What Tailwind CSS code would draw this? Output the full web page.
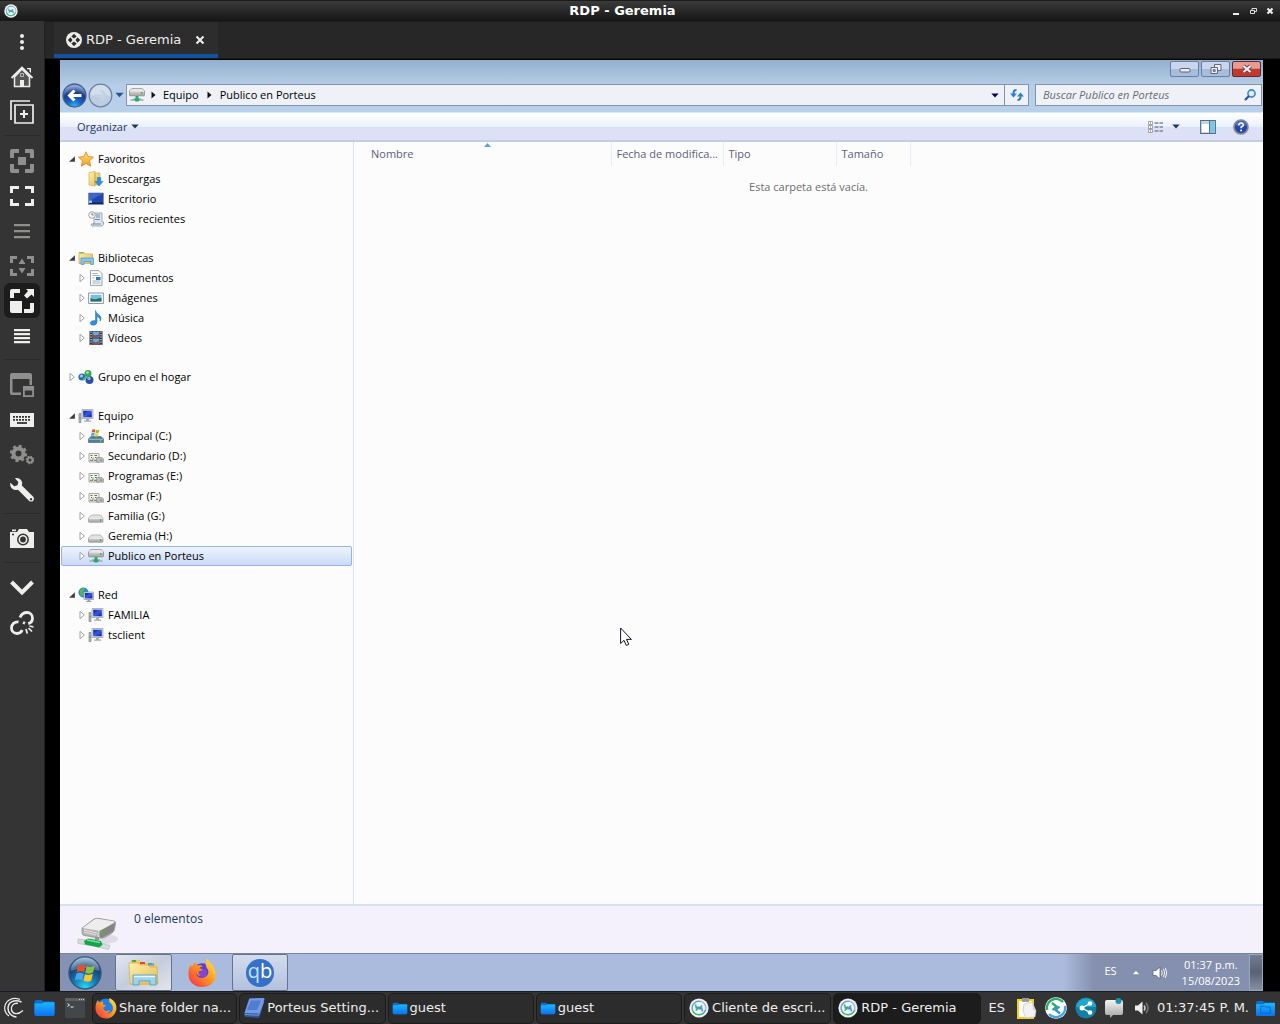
<!DOCTYPE html>
<html lang="es">
  <head>
    <meta charset="UTF-8" />
    <meta name="viewport" content="width=device-width, initial-scale=1" />
    <title>RDP - Geremia</title>
    <script src="https://cdn.jsdelivr.net/npm/@tailwindcss/browser@4"></script>
  </head>
  <body class="flex min-h-screen flex-col bg-[#2f2f2f] font-['DejaVu_Sans',sans-serif] text-[13px] text-[#eeeeec]">
    <!-- shared icons -->
    <svg class="absolute size-0" aria-hidden="true">
      <defs>
        <linearGradient id="gFolder" x1="0" y1="0" x2="0" y2="1"><stop offset="0" stop-color="#1cb5ff" /><stop offset="1" stop-color="#0a72f0" /></linearGradient>
        <linearGradient id="gYellow" x1="0" y1="0" x2="1" y2="1"><stop offset="0" stop-color="#fff2b0" /><stop offset="1" stop-color="#e3b94f" /></linearGradient>
        <linearGradient id="gStar" x1="0" y1="0" x2="0" y2="1"><stop offset="0" stop-color="#ffe680" /><stop offset="1" stop-color="#f59a1c" /></linearGradient>
        <linearGradient id="gScreen" x1="0" y1="0" x2="1" y2="1"><stop offset="0" stop-color="#0a1a9c" /><stop offset=".5" stop-color="#3a5ae0" /><stop offset="1" stop-color="#0c1f9a" /></linearGradient>
        <linearGradient id="gMetal" x1="0" y1="0" x2="0" y2="1"><stop offset="0" stop-color="#f4f4f4" /><stop offset="1" stop-color="#a2a2a2" /></linearGradient>
        <linearGradient id="gFire" x1="1" y1="0" x2="0" y2="1"><stop offset="0" stop-color="#fff04a" /><stop offset=".45" stop-color="#ff9a1f" /><stop offset="1" stop-color="#f5264f" /></linearGradient>
      </defs>
      <symbol id="remmina" viewBox="0 0 20 20">
        <circle cx="10" cy="10" r="9.6" fill="#f1f1ef" />
        <path d="M3.6 12.5A7 7 0 0 1 12.5 3.5" fill="none" stroke="#5b9be0" stroke-width="1.3" />
        <path d="M12.5 3.5A7 7 0 0 1 16.6 12" fill="none" stroke="#7db2ec" stroke-width="1.3" />
        <path d="M3.6 12.5A7 7 0 0 0 16.6 12" fill="none" stroke="#36b583" stroke-width="1.5" />
        <path d="M6.500 6.500l.8 3.300 3.200-.8M6.800 12.500l3.500-3.500" fill="none" stroke="#2fb37c" stroke-width="1.500" />
        <path d="M13.500 13.500l-.8-3.300-3.200.8M13.200 7.500L9.700 11" fill="none" stroke="#4a8fe0" stroke-width="1.500" />
      </symbol>
      <symbol id="folder" viewBox="0 0 22 18">
        <path d="M1 3a2 2 0 0 1 2-2h5l2 1.600h9a2 2 0 0 1 2 2V15a2 2 0 0 1-2 2H3a2 2 0 0 1-2-2z" fill="#0a6fd0" />
        <path d="M1 4.500h7.500l2-1.200H21V15a2 2 0 0 1-2 2H3a2 2 0 0 1-2-2z" fill="url(#gFolder)" />
      </symbol>
      <symbol id="firefox" viewBox="0 0 28 28">
        <circle cx="14" cy="15.500" r="10.500" fill="#5b3fd6" />
        <path d="M18.500.5c1 2.500 4 4.500 6.200 8.200C28.500 15.500 27 23 20.500 26.500 13 30 4 27.500 1.200 20-.3 15 .5 9.500 3 6c0 1 .2 2 .8 2.700C4.500 6.500 6 4.700 7.500 3.500c.2 1.700.7 3 2 3.700 1.600-.6 3.500-.3 4.800 1-2 .2-3.300 1.200-3.800 2.300-1.500.6-3 1.800-2.800 4C8.300 18.500 12 20 15.500 18.800c3.500-1.300 5-4.300 3.800-7.300-.7-1.700-2-2.500-2.300-5.500C16.900 4 17.500 2 18.500.5z" fill="url(#gFire)" />
        <circle cx="14.500" cy="14.500" r="3.800" fill="#8443dd" />
        <path d="M7.700 11c2-1.500 4.300-1.300 6.300 0-1 1-2 1.700-3.700 1.800-.5 2 .4 3.700 2 4.300-3 .4-5-2.300-4.600-6.100z" fill="#ff8a16" />
      </symbol>
      <symbol id="firefox-blue" viewBox="0 0 24 24">
        <circle cx="12" cy="12" r="10.500" fill="#1f7fe6" />
        <path d="M15.500 1C21 3 24 8 23.300 13.500 22 20 17.500 23.500 12 23.500 5 23.500.5 18 .5 12 .5 8 1.500 5 3.500 3c0 1.600.5 2.600 1.300 3.300C6.500 5 8 4.800 9.300 5.300 8.500 6.500 8.600 7.800 9.500 8.800h2.300c0 1.500-2.500 2.200-2.800 3.200 0 2.400 2 3.500 4 3.200 1.500-.3 2.200-.6 3.200-.2-.8 1.800-2.700 2.800-4.700 2.800 3.800 1.200 7.800-1 8-5.300.2-4-2.500-5.500-4-7.500z" fill="url(#gFire)" />
      </symbol>
      <symbol id="computer" viewBox="0 0 16 16">
        <path d="M1 5.500h2v9H1z" fill="#b9bcc0" stroke="#70757c" stroke-width=".6" /><path d="M1.500 9h1v2h-1z" fill="#4cae3c" />
        <path d="M4 1.500h11v9H4z" fill="#dfe3ea" stroke="#949ba8" stroke-width=".7" />
        <path d="M5.200 2.700h8.600v6.600H5.200z" fill="url(#gScreen)" /><path d="M8 10.800h3v1.700h2.200v1.300H6v-1.300h2z" fill="#a5abb5" />
      </symbol>
      <symbol id="drive" viewBox="0 0 16 16">
        <path d="M3.500 7h9L15 10v3.500q0 .8-.8.8H1.300q-.8 0-.8-.8V10z" fill="url(#gMetal)" stroke="#8b8b8b" stroke-width=".6" />
        <path d="M.8 10.200h14" stroke="#fff" stroke-width=".8" /><path d="M12 11h1.200v2H12z" fill="#4ba83a" />
      </symbol>
      <symbol id="shared-drive" viewBox="0 0 16 16">
        <path d="M1 5.500h10V14H1z" fill="#f4f4ea" stroke="#85877f" stroke-width=".7" />
        <path d="M2.500 7.500h2M6.500 7.500h2.500M3 9.500h1M7 9.500h1.500M2 12.300h3M6 12.300h3" stroke="#65645b" stroke-width="1.100" /><path d="M5 9.500v3" stroke="#4ca45c" />
        <path d="M8.500 9.500H14l1.500 1.700v3h-7z" fill="#b9bab7" stroke="#7b7d78" stroke-width=".5" /><path d="M12.500 11.600h1.200v1.500h-1.200z" fill="#3ea341" />
      </symbol>
      <symbol id="net-drive" viewBox="0 0 16 16">
        <path d="M3 1.500h10l2.500 2.300V8q0 .8-.8.8H1.300Q.5 8.800.5 8V3.800z" fill="url(#gMetal)" stroke="#85858a" stroke-width=".7" />
        <path d="M1 4h14" stroke="#fff" stroke-width=".6" /><path d="M12.200 5h1.200v2h-1.200z" fill="#43a738" />
        <path d="M6.500 9h3v2.500H12L9.500 14.500h-3L4 11.500h2.500z" fill="#27a768" /><path d="M1.500 13h4M10.500 13h4" stroke="#9ca5a5" stroke-width="1.700" />
      </symbol>
      <symbol id="win-flag" viewBox="0 0 20 20">
        <path d="M3.500 3.500Q6.500 1.500 10 3.300L8.800 9Q5.500 7.300 2.300 9z" fill="#e8502a" />
        <path d="M11 3.700Q14 5.200 18 3.200L16.600 9Q13 11 9.800 9.400z" fill="#8bc53f" />
        <path d="M2 10.200Q5 8.600 8.500 10.200L7.200 16Q4 14.400.8 16z" fill="#46a8e8" />
        <path d="M9.500 10.600Q13 12 16.400 10.200L15 16Q12 18 8.300 16.400z" fill="#fdc72d" />
      </symbol>
      <symbol id="open" viewBox="0 0 8 8"><path d="M7.800.200v7.600H.2z" fill="#3c3c3c" /></symbol>
      <symbol id="closed" viewBox="0 0 8 10"><path d="M2 1.300v7.400L6.300 5z" fill="#fff" stroke="#a3a3a3" /></symbol>
      <symbol id="caret" viewBox="0 0 8 5"><path d="M.3.5h7.400L4 4.600z" fill="currentColor" /></symbol>
      <symbol id="right" viewBox="0 0 5 8"><path d="M.5.5v7L4.500 4z" fill="#111" /></symbol>
    </svg>

    <!-- window title -->
    <header class="flex h-[21px] shrink-0 items-center border-t border-[#1b1b1b] bg-linear-to-b from-[#3b3b3b] to-[#161616] px-1">
      <svg class="size-[14px]"><use href="#remmina" /></svg>
      <h1 class="flex-1 pr-1 text-center text-[13px] font-bold text-white">RDP - Geremia</h1>
      <div class="flex gap-[7px] pr-px">
        <button aria-label="Minimizar"><svg class="size-[10px]" viewBox="0 0 10 10"><path d="M2 7h6v2H2z" fill="#eee" /></svg></button>
        <button aria-label="Restaurar"><svg class="size-[10px]" viewBox="0 0 10 10" fill="none" stroke="#ddd"><path d="M4 4V2.500h4.500v3H7M2.500 4.500h4v3h-4z" /></svg></button>
        <button aria-label="Cerrar"><svg class="size-[10px]" viewBox="0 0 10 10"><path d="M2.500 2.500l5 5M7.500 2.500l-5 5" stroke="#eee" stroke-width="2.200" /></svg></button>
      </div>
    </header>

    <div class="flex flex-1">
      <!-- Remmina toolbar -->
      <nav class="flex w-[45px] shrink-0 flex-col border-r border-[#222] bg-[#343434] px-1 pt-[3px]" aria-label="Herramientas">
        <button class="flex h-[35px] items-center justify-center" aria-label="Menú"><svg class="size-6" viewBox="0 0 24 24" fill="#eeeeec"><circle cx="12" cy="6" r="2" /><circle cx="12" cy="12" r="2" /><circle cx="12" cy="18" r="2" /></svg></button>
        <button class="flex h-[35px] items-center justify-center" aria-label="Inicio"><svg class="size-6" viewBox="0 0 24 24"><path d="M4.500 12v9.500h15V12L12 4z" fill="#555" stroke="#eeeeec" stroke-width="1.500" /><path d="M1.500 13L12 2.500 22.500 13" fill="none" stroke="#eeeeec" stroke-width="1.800" /><path d="M17 3h4v5l-1.500-1.500V4.300H17zM10 15h4v7h-4z" fill="#eeeeec" /><path d="M10.500 8.500h3v3h-3z" fill="none" stroke="#bbb" /></svg></button>
        <button class="flex h-[35px] items-center justify-center" aria-label="Duplicar conexión"><svg class="size-6" viewBox="0 0 24 24" fill="none" stroke="#eeeeec" stroke-width="1.700"><path d="M1 20V1h19M5 5h18v18H5z" /><path d="M14 10v8M10 14h8" stroke-width="2" /></svg></button>
        <hr class="my-1.5 h-[2px] border-0 border-t border-[#2b2b2b]" />
        <button class="flex h-[35px] items-center justify-center" aria-label="Ajustar ventana"><svg class="size-6" viewBox="0 0 24 24" fill="#8f8f8d"><path d="M0 9V2q0-2 2-2h7v4H4v5zM15 0h7q2 0 2 2v7h-4V4h-5zM24 15v7q0 2-2 2h-7v-4h5v-5zM9 24H2q-2 0-2-2v-7h4v5h5zM8 8h8v8H8z" /></svg></button>
        <button class="flex h-[35px] items-center justify-center" aria-label="Pantalla completa"><svg class="size-6" viewBox="0 0 24 24" fill="none" stroke="#eeeeec" stroke-width="3"><path d="M1.500 9V3.500H9M15 3.500h7.500V9M22.500 15v5.500H15M9 20.500H1.500V15" /></svg></button>
        <button class="flex h-[35px] items-center justify-center" aria-label="Opciones de pantalla"><svg class="size-6" viewBox="0 0 24 24" fill="#8f8f8d"><path d="M4 5h16v2.200H4zM4 11h16v2.200H4zM4 17h16v2.200H4z" /></svg></button>
        <button class="flex h-[35px] items-center justify-center" aria-label="Resolución dinámica"><svg class="size-6" viewBox="0 0 24 24"><path d="M1.500 9V3.500H7M17 3.500h5.500V9M22.500 15v5.500H17M7 20.500H1.500V15" fill="none" stroke="#8f8f8d" stroke-width="3" /><path d="M12 4.500l3.500 5.500h-7zM12 19.500l3.500-5.500h-7z" fill="#8f8f8d" /></svg></button>
        <button class="flex h-[35px] items-center justify-center rounded-md bg-[#1c1c1c]" aria-label="Modo escalado" aria-pressed="true"><svg class="size-6" viewBox="0 0 24 24" fill="#eeeeec"><path d="M0 9V2q0-2 2-2h8v4H4v5zM24 14v8q0 2-2 2h-8v-4h6v-6zM0 12h12v12H2q-2 0-2-2zM16 0h8v8l-2.500-2.500-4.500 4-3-3 4-4.500z" /></svg></button>
        <button class="flex h-[35px] items-center justify-center" aria-label="Calidad"><svg class="size-6" viewBox="0 0 24 24" fill="#eeeeec"><path d="M4 5h16v2.200H4zM4 9h16v2.200H4zM4 13h16v2.200H4zM4 17h16v2.200H4z" /></svg></button>
        <hr class="my-1.5 h-[2px] border-0 border-t border-[#2b2b2b]" />
        <button class="flex h-[35px] items-center justify-center" aria-label="Multimonitor"><svg class="size-6" viewBox="0 0 24 24" fill="#8f8f8d"><path d="M2 0h18q2 0 2 2v10h-2.500V6h-17v13.500H11V22H2q-2 0-2-2V2q0-2 2-2z" /><path d="M13 13h11v11H13zm1.800 4.500v4.700h7.400v-4.700z" fill-rule="evenodd" /></svg></button>
        <button class="flex h-[35px] items-center justify-center" aria-label="Teclado"><svg class="size-6" viewBox="0 0 24 24"><path d="M0 5h24v14H0z" fill="#eeeeec" /><path d="M3 8.800h18M3 11.800h18" stroke="#343434" stroke-width="1.800" stroke-dasharray="2 1" /><path d="M7 15h10" stroke="#343434" stroke-width="1.800" /></svg></button>
        <button class="flex h-[35px] items-center justify-center" aria-label="Preferencias"><svg class="size-6" viewBox="0 0 24 24" fill="none" stroke="#8f8f8d"><circle cx="8.500" cy="10.500" r="5" stroke-width="4" /><circle cx="8.500" cy="10.500" r="7.600" stroke-width="2.200" stroke-dasharray="3 2.970" /><circle cx="20" cy="17" r="2.500" stroke-width="2" /><circle cx="20" cy="17" r="3.700" stroke-width="1.200" stroke-dasharray="1.500 1.400" /></svg></button>
        <button class="flex h-[35px] items-center justify-center" aria-label="Herramientas"><svg class="size-6" viewBox="0 0 24 24" fill="#eeeeec"><path fill-rule="evenodd" d="M5 .3C8-.5 11 1 12 4c.3 1.300.2 2.500-.2 3.500L23 18.500c1.300 1.300 1.300 3 .2 4.200-1.200 1.200-3 1.200-4.200 0L8 11.800C4.500 13 .8 10.700.3 7.200.1 6.300.1 5.500.3 4.700l4 3.600 3.200-1 .8-3.200zM21 20a1.200 1.200 0 1 0 .1 0z" /></svg></button>
        <hr class="my-1.5 h-[2px] border-0 border-t border-[#2b2b2b]" />
        <button class="flex h-[35px] items-center justify-center" aria-label="Captura de pantalla"><svg class="size-6" viewBox="0 0 24 24"><path d="M0 5h7l2-3h8l2 3h5v16H0z" fill="#eeeeec" /><path d="M2 2.500h4v1.700H2z" fill="#eeeeec" /><circle cx="13" cy="12.500" r="5.200" fill="none" stroke="#343434" stroke-width="1.500" /><circle cx="13" cy="12.500" r="2.900" fill="#343434" /><path d="M2 7.500h2" stroke="#343434" stroke-width="1.500" /></svg></button>
        <hr class="my-1.5 h-[2px] border-0 border-t border-[#2b2b2b]" />
        <button class="flex h-[35px] items-center justify-center" aria-label="Minimizar ventana"><svg class="size-6" viewBox="0 0 24 24" fill="none" stroke="#eeeeec" stroke-width="4"><path d="M1.500 6L12 16.500 22.500 6" /></svg></button>
        <button class="flex h-[35px] items-center justify-center" aria-label="Desconectar"><svg class="size-6" viewBox="0 0 24 24" fill="none" stroke="#eeeeec" stroke-width="2.800"><path d="M10 6.500C11.500 3 14 1.500 17 1.500c3.200 0 5.500 2.500 5.500 5.500 0 2.800-1.800 5-4.300 5.700M8.500 10.800C4.500 10.500 1.500 13.300 1.500 17c0 3 2.300 5.500 5.500 5.500 2.500 0 4.300-1.300 5.200-3.500M15 12.300l-2-.8" /><path d="M16 18l1.300 4.500M18.500 17l3.500 3.500M19.500 15l4 1" stroke-width="1.700" /></svg></button>
      </nav>

      <div class="flex flex-1 flex-col">
        <!-- connection tabs -->
        <div class="flex h-[38px] shrink-0 border-t border-b border-[#1b1b1b] bg-[#272727] pl-[9px]" role="tablist">
          <div class="flex w-[164px] items-center border-b-4 border-[#1551a3] bg-[#2d2d2d] pt-[3px] pl-3" role="tab" aria-selected="true">
            <svg class="mr-1 size-4" viewBox="0 0 16 16"><circle cx="8" cy="8" r="8" fill="#eeeeec" /><g fill="#2d2d2d"><path d="M8 1.800l2.700 2.700L8 6.500 5.300 4.500zM8 14.200l2.700-2.700L8 9.500l-2.700 2zM1.800 8l2.700-2.700L6.500 8l-2 2.700zM14.200 8l-2.700-2.700L9.500 8l2 2.700z" /></g></svg>
            <span>RDP - Geremia</span>
            <button class="ml-[14px]" aria-label="Cerrar pestaña"><svg class="size-[10px]" viewBox="0 0 10 10"><path d="M1.500 1.500l7 7M8.500 1.500l-7 7" stroke="#eee" stroke-width="2.100" /></svg></button>
          </div>
        </div>

        <div class="flex flex-1 bg-black pt-px pr-[17px] pl-[15px]">
          <!-- remote desktop -->
          <div class="flex flex-1 flex-col bg-[#fcfcfc] font-['Open_Sans','Noto_Sans',sans-serif] text-[11px] leading-5 text-black">
            <!-- explorer frame -->
            <div class="flex h-[52px] shrink-0 flex-col bg-linear-to-b from-[#94b0cf] via-[#b7cee8] to-[#b8d0e9]">
              <div class="flex h-[24px] items-start justify-end gap-[2px] pt-px pr-[2px]">
                <button class="flex h-4 w-[29px] items-center justify-center rounded-[2px] border border-[#6c7da6] bg-linear-to-b from-[#c8d7eb] from-50% to-[#a6bddb] to-50%" aria-label="Minimizar"><svg class="h-2 w-3" viewBox="0 0 12 8"><rect x="1" y="3.500" width="10" height="3.500" rx="1" fill="#eee" stroke="#5c6070" /></svg></button>
                <button class="flex h-4 w-[29px] items-center justify-center rounded-[2px] border border-[#6c7da6] bg-linear-to-b from-[#c8d7eb] from-50% to-[#a6bddb] to-50%" aria-label="Restaurar"><svg class="size-3" viewBox="0 0 12 12"><path d="M4.500 1.500h6.500v6H4.500z" fill="#eee" stroke="#555b70" stroke-width=".9" /><path d="M1 4.500h6.500v6H1z" fill="#eee" stroke="#555b70" stroke-width=".9" /><path d="M3.200 6.700h2v1.700h-2z" fill="#b4c6df" stroke="#555b70" stroke-width=".9" /></svg></button>
                <button class="flex h-4 w-[29px] items-center justify-center rounded-[2px] border border-[#5c2940] bg-linear-to-b from-[#e89c90] from-45% to-[#c43a28] to-50%" aria-label="Cerrar"><svg class="h-[10px] w-3" viewBox="0 0 12 10"><path d="M2.500 2l7 6M9.500 2l-7 6" stroke="#63405a" stroke-width="4" /><path d="M2.500 2l7 6M9.500 2l-7 6" stroke="#f4eef0" stroke-width="2.200" /></svg></button>
              </div>
              <div class="flex h-[22px] items-center">
                <div class="flex w-[66px] shrink-0 items-center gap-px pl-[2px]">
                  <button aria-label="Atrás"><svg class="size-[25px]" viewBox="0 0 25 25"><defs><radialGradient id="gBack" cx=".5" cy="1" r=".9"><stop offset="0" stop-color="#37bdf5" /><stop offset=".4" stop-color="#165bc0" /><stop offset=".7" stop-color="#1a3b92" /><stop offset="1" stop-color="#8ba5d8" /></radialGradient></defs><circle cx="12.500" cy="12.500" r="11.500" fill="url(#gBack)" stroke="#4b608b" stroke-width="1.300" /><path d="M19.500 12.500H8M12.500 7.500l-5 5 5 5" fill="none" stroke="#fff" stroke-width="3" /></svg></button>
                  <button aria-label="Adelante"><svg class="size-[25px]" viewBox="0 0 25 25"><circle cx="12.500" cy="12.500" r="11.300" fill="#bccde2" stroke="#6d7f9a" stroke-width="1.200" /><path d="M2.500 12a10 10 0 0 1 20 0q-10 3-20 0z" fill="#d2deec" /><path d="M6 12.500h11M13 7.500l5 5-5 5" fill="none" stroke="#c5d2e4" stroke-width="2.500" /></svg></button>
                  <button class="ml-px text-[#28558f]" aria-label="Páginas recientes"><svg class="h-[6px] w-[9px]"><use href="#caret" width="9" height="6" /></svg></button>
                </div>
                <div class="flex h-[22px] flex-1 items-center border border-[#8393a8] bg-[#eef2f8]">
                  <svg class="mx-[2px] size-4 shrink-0"><use href="#net-drive" /></svg>
                  <svg class="mr-[7px] ml-1 h-2 w-[5px]"><use href="#right" /></svg>
                  <a href="#equipo">Equipo</a>
                  <svg class="mx-2 h-2 w-[5px]"><use href="#right" /></svg>
                  <a href="#publico">Publico en Porteus</a>
                  <button class="mr-[5px] ml-auto text-[#06064f]" aria-label="Ubicaciones anteriores"><svg class="h-[5px] w-2"><use href="#caret" /></svg></button>
                  <button class="flex h-full w-[24px] items-center justify-center border-l border-[#8393a8]" aria-label="Actualizar"><svg class="size-[14px]" viewBox="0 0 14 14"><path d="M6.500 2Q3.500 2 3.500 5v1M7.500 12q3 0 3-3V8" fill="none" stroke="#2d7cc8" stroke-width="2" /><path d="M0 5.500h7L3.500 9.500zM7 8.500h7L10.500 4.500z" fill="#2f7fcb" /></svg></button>
                </div>
                <label class="mr-px ml-[6px] flex h-[22px] w-[227px] items-center border border-[#8393a8] bg-[#eef2f8]">
                  <input class="w-full min-w-0 flex-1 bg-transparent pl-[7px] italic outline-none placeholder:text-[#6a6a6a]" type="text" aria-label="Buscar" placeholder="Buscar Publico en Porteus" />
                  <svg class="mr-[5px] size-3 shrink-0" viewBox="0 0 12 12" fill="none"><circle cx="7.500" cy="4.500" r="3.600" fill="#d9eefb" stroke="#3c86c8" stroke-width="1.600" /><path d="M5 7L1 11" stroke="#24509c" stroke-width="2.200" /></svg>
                </label>
              </div>
            </div>

            <!-- command bar -->
            <div class="flex h-[30px] shrink-0 items-center border-t border-b-2 border-t-[#dbe7f5] border-b-[#c3cfdf] bg-linear-to-b from-[#fbfdff] from-10% via-[#eaf0fa] via-50% to-[#dce1f5] to-50% pr-[14px] pl-[17px] text-[#1e395b]">
              <button class="flex items-center gap-1">Organizar <svg class="h-[5px] w-2"><use href="#caret" /></svg></button>
              <button class="ml-auto flex items-center gap-2" aria-label="Cambiar la vista">
                <svg class="h-3 w-4" viewBox="0 0 16 12"><path d="M.5.5h4v3h-4zM.5 4.500h4v3h-4zM.5 8.500h4v3h-4z" fill="#fff" stroke="#8790a0" stroke-width=".8" /><path d="M2 2h1M2 10h1" stroke="#c33" /><path d="M2 6h1" stroke="#3a3" /><path d="M6.500 2h4M11.500 2H15M6.500 6h4M11.500 6H15M6.500 10h4M11.500 10H15" stroke="#7d879c" stroke-width="1.300" /></svg>
                <svg class="h-[5px] w-2"><use href="#caret" /></svg>
              </button>
              <button class="ml-5" aria-label="Mostrar el panel de vista previa"><svg class="h-[14px] w-4" viewBox="0 0 16 14"><path d="M.7.700h14.600v12.600H.700z" fill="#fff" stroke="#4d6a91" stroke-width="1.200" /><path d="M1.300 3h8" stroke="#8aa5c6" /><path d="M10 1.200h4.800v11.600H10z" fill="#7fc4e4" /><path d="M9.500 1v12" stroke="#4d7498" /></svg></button>
              <button class="ml-[17px]" aria-label="Ayuda"><svg class="size-4" viewBox="0 0 16 16"><circle cx="8" cy="8" r="7" fill="#2345a8" stroke="#7f8a9b" stroke-width="1.700" /><path d="M2.500 6.500a5.600 5.600 0 0 1 11 0q-5.500 2-11 0z" fill="#4c6cc4" /><path d="M5.700 6.200q.2-2.200 2.400-2.200t2.200 2c0 1.200-1.200 1.300-2.100 2.100v1.100" fill="none" stroke="#fff" stroke-width="1.500" /><circle cx="8.100" cy="11.600" r="1" fill="#fff" /></svg></button>
            </div>

            <div class="flex flex-1">
              <!-- navigation pane -->
              <nav class="w-[294px] shrink-0 border-r border-[#d9e2ee] px-px pt-[7px]" aria-label="Panel de navegación">
                <ul class="mb-[19px]">
                  <li><a href="#" class="flex h-5 items-center pl-2"><svg class="mr-[3px] size-[6px]"><use href="#open" /></svg><svg class="mr-1 size-4" viewBox="0 0 16 16"><path d="M8 .8l2.200 4.800 5.300.6-4 3.500 1.200 5.500L8 12.500l-4.700 2.700 1.200-5.500-4-3.500 5.300-.6z" fill="url(#gStar)" stroke="#dd8a2d" stroke-width=".9" /></svg>Favoritos</a></li>
                  <li><a href="#" class="flex h-5 items-center pl-[27px]"><svg class="mr-1 size-4" viewBox="0 0 16 16"><path d="M1 1.500l6-1V15l-6-1zM7 2h5v12H7z" fill="url(#gYellow)" stroke="#c9a347" stroke-width=".6" /><path d="M9.300 6.500h3.400v4H15L11 15l-4-4.500h2.300z" fill="#2c91e5" stroke="#1b6bbd" stroke-width=".5" /></svg>Descargas</a></li>
                  <li><a href="#" class="flex h-5 items-center pl-[27px]"><svg class="mr-1 size-4" viewBox="0 0 16 16"><path d="M.5 2h15v11.500H.5z" fill="#2346ab" stroke="#7b8cb0" stroke-width=".8" /><path d="M1 2.500h14L1 10z" fill="#3f67c9" /><path d="M1 11.500h14V13H1z" fill="#122556" /><path d="M1 9.500h3V12H1z" fill="#8acdf0" /></svg>Escritorio</a></li>
                  <li><a href="#" class="flex h-5 items-center pl-[27px]"><svg class="mr-1 size-4" viewBox="0 0 16 16"><path d="M6 2h8v9h1.500v2.500L14 15H4l-1-2h3z" fill="#e2e8ef" stroke="#8a94a2" stroke-width=".8" /><path d="M8 4h4M8 6h4M7 8.500h5M5 13h8" stroke="#71859e" /><circle cx="4" cy="4" r="3.300" fill="#f6f6f6" stroke="#9b9b9b" stroke-width=".9" /><path d="M4 2v2h1.600" fill="none" stroke="#666" stroke-width=".8" /></svg>Sitios recientes</a></li>
                </ul>
                <ul class="mb-[19px]">
                  <li><a href="#" class="flex h-5 items-center pl-2"><svg class="mr-[3px] size-[6px]"><use href="#open" /></svg><svg class="mr-1 size-4" viewBox="0 0 16 16"><path d="M1 2.500h5l1 1.500h7.500v9.500H1z" fill="url(#gYellow)" stroke="#caa54c" stroke-width=".7" /><path d="M1.500 3h4" stroke="#52a754" /><path d="M3 8h12.500v6.500h-3v-3H6v3H3z" fill="#82c7ec" stroke="#4c94c3" stroke-width=".7" /></svg>Bibliotecas</a></li>
                  <li><a href="#" class="flex h-5 items-center pl-[17px]"><svg class="mr-[2px] h-[10px] w-2"><use href="#closed" /></svg><svg class="mr-1 size-4" viewBox="0 0 16 16"><path d="M2.500.6h8.500l3 3v11.800H2.500z" fill="#fdfdfd" stroke="#8d97a4" stroke-width=".9" /><path d="M4.500 3.500h5M4.500 5.500h7M4.500 11h8M4.500 13h8M4.500 8h2" stroke="#a4adb9" /><path d="M8 7h4.500v3H8z" fill="#3477b8" /></svg>Documentos</a></li>
                  <li><a href="#" class="flex h-5 items-center pl-[17px]"><svg class="mr-[2px] h-[10px] w-2"><use href="#closed" /></svg><svg class="mr-1 size-4" viewBox="0 0 16 16"><path d="M.6 3h14.800v10.500H.6z" fill="#fff" stroke="#818b98" stroke-width=".9" /><path d="M2.500 4.800h11v6.800h-11z" fill="#75bfe8" /><path d="M2.500 8q4 2 6 1t5-1v3.600h-11z" fill="#2b715c" /></svg>Imágenes</a></li>
                  <li><a href="#" class="flex h-5 items-center pl-[17px]"><svg class="mr-[2px] h-[10px] w-2"><use href="#closed" /></svg><svg class="mr-1 size-4" viewBox="0 0 16 16"><path d="M7.500.5q.5 2.500 3.500 4.200 3.300 2.300 1.300 6.300Q12.500 7.500 9 6.500v5.500q0 2.500-3 3.200-3.500.4-3.800-2 .2-2.800 5.300-2.700z" fill="#3190dd" stroke="#1c6eb9" stroke-width=".5" /></svg>Música</a></li>
                  <li><a href="#" class="flex h-5 items-center pl-[17px]"><svg class="mr-[2px] h-[10px] w-2"><use href="#closed" /></svg><svg class="mr-1 size-4" viewBox="0 0 16 16"><path d="M1.500 1h13v14h-13z" fill="#2b3036" /><path d="M4.500 1.500h7v6h-7zM4.500 8.500h7v6h-7z" fill="#67a9dc" /><path d="M4.500 4l3 1.500 4-1.500v2l-2 1.500h-5zM4.500 11l3 1.500 4-1.500v2l-2 1.500h-5z" fill="#8f5148" /><path d="M3 1.500v13M13 1.500v13" stroke="#dce5ec" stroke-width="1.300" stroke-dasharray="1.300 1.200" /></svg>Vídeos</a></li>
                </ul>
                <ul class="mb-[19px]">
                  <li><a href="#" class="flex h-5 items-center pl-[7px]"><svg class="mr-[2px] h-[10px] w-2"><use href="#closed" /></svg><svg class="mr-1 size-4" viewBox="0 0 16 16"><circle cx="4" cy="8" r="3.600" fill="#2e68bd" /><circle cx="11.500" cy="11" r="4" fill="#294fae" /><circle cx="10" cy="4.500" r="3.500" fill="#3ba256" /><circle cx="3.500" cy="7" r="1.500" fill="#9dd3f0" /><circle cx="11" cy="9.500" r="1.500" fill="#a6c8f2" /><circle cx="9.500" cy="3.500" r="1.300" fill="#b9ecc0" /><path d="M5 11l3-3 3 2" fill="none" stroke="#55b877" stroke-width="1.500" /></svg>Grupo en el hogar</a></li>
                </ul>
                <ul id="equipo" class="mb-[19px]">
                  <li><a href="#" class="flex h-5 items-center pl-2"><svg class="mr-[3px] size-[6px]"><use href="#open" /></svg><svg class="mr-1 size-4"><use href="#computer" /></svg>Equipo</a></li>
                  <li><a href="#" class="flex h-5 items-center pl-[17px]"><svg class="mr-[2px] h-[10px] w-2"><use href="#closed" /></svg><svg class="mr-1 size-4" viewBox="0 0 16 16"><path d="M3 8.500h10l2.500 2.500v3.500H.5V11z" fill="#4f7f96" stroke="#41606f" stroke-width=".6" /><path d="M1 11.300h14" stroke="#b5d2dd" stroke-width=".8" /><path d="M12 12.300h1.300v1.400H12z" fill="#7be05b" /><use href="#win-flag" x="2" y="0" width="11" height="10" /></svg>Principal (C:)</a></li>
                  <li><a href="#" class="flex h-5 items-center pl-[17px]"><svg class="mr-[2px] h-[10px] w-2"><use href="#closed" /></svg><svg class="mr-1 size-4"><use href="#shared-drive" /></svg>Secundario (D:)</a></li>
                  <li><a href="#" class="flex h-5 items-center pl-[17px]"><svg class="mr-[2px] h-[10px] w-2"><use href="#closed" /></svg><svg class="mr-1 size-4"><use href="#shared-drive" /></svg>Programas (E:)</a></li>
                  <li><a href="#" class="flex h-5 items-center pl-[17px]"><svg class="mr-[2px] h-[10px] w-2"><use href="#closed" /></svg><svg class="mr-1 size-4"><use href="#shared-drive" /></svg>Josmar (F:)</a></li>
                  <li><a href="#" class="flex h-5 items-center pl-[17px]"><svg class="mr-[2px] h-[10px] w-2"><use href="#closed" /></svg><svg class="mr-1 size-4"><use href="#drive" /></svg>Familia (G:)</a></li>
                  <li><a href="#" class="flex h-5 items-center pl-[17px]"><svg class="mr-[2px] h-[10px] w-2"><use href="#closed" /></svg><svg class="mr-1 size-4"><use href="#drive" /></svg>Geremia (H:)</a></li>
                  <li><a href="#" id="publico" aria-current="page" class="flex h-5 items-center rounded-[2px] border border-[#94b6dc] bg-linear-to-b from-[#eef3fd] to-[#cbdafa] pl-4"><svg class="mr-[2px] h-[10px] w-2"><use href="#closed" /></svg><svg class="mr-1 size-4"><use href="#net-drive" /></svg>Publico en Porteus</a></li>
                </ul>
                <ul>
                  <li><a href="#" class="flex h-5 items-center pl-2"><svg class="mr-[3px] size-[6px]"><use href="#open" /></svg><svg class="mr-1 size-4" viewBox="0 0 16 16"><circle cx="5.500" cy="5.500" r="5" fill="#2b8ad4" /><path d="M2 3q3-3 5-1.500L5 5l1 3-3 1Q1 6 2 3z" fill="#55b64c" /><path d="M6 5h9.500v7.500H6z" fill="#dde2ea" stroke="#7d8798" stroke-width=".6" /><path d="M7 6h7.500v5.500H7z" fill="url(#gScreen)" /><path d="M9.500 12.500h2.500V14h1.500v1H8v-1h1.500z" fill="#9ba3af" /></svg>Red</a></li>
                  <li><a href="#" class="flex h-5 items-center pl-[17px]"><svg class="mr-[2px] h-[10px] w-2"><use href="#closed" /></svg><svg class="mr-1 size-4"><use href="#computer" /></svg>FAMILIA</a></li>
                  <li><a href="#" class="flex h-5 items-center pl-[17px]"><svg class="mr-[2px] h-[10px] w-2"><use href="#closed" /></svg><svg class="mr-1 size-4"><use href="#computer" /></svg>tsclient</a></li>
                </ul>
              </nav>

              <!-- file list -->
              <main class="relative flex-1">
                <table class="w-[557px] table-fixed text-left text-[#5a5f7d]">
                  <thead>
                    <tr class="h-6">
                      <th class="relative w-[257px] border-r border-[#e6edf6] pl-[17px] font-normal">Nombre<svg class="absolute top-px left-[130px] h-1 w-[7px]" viewBox="0 0 7 4"><path d="M0 4L3.500 0 7 4z" fill="#6ba3c8" /></svg></th>
                      <th class="w-[112px] truncate border-r border-[#e6edf6] pl-[5px] font-normal">Fecha de modifica...</th>
                      <th class="w-[113px] border-r border-[#e6edf6] pl-[5px] font-normal">Tipo</th>
                      <th class="border-r border-[#e6edf6] pl-[5px] font-normal">Tamaño</th>
                    </tr>
                  </thead>
                </table>
                <p class="mt-[11px] text-center text-[#6d6d6d]">Esta carpeta está vacía.</p>
                <svg class="absolute top-[485px] left-[266px] h-[19px] w-3" viewBox="0 0 12 19"><path d="M.6 1v15.500l3.400-3.200 2.300 5.200 2.500-1.200-2.300-4.900h4.900z" fill="#fff" stroke="#14142b" stroke-width="1" /></svg>
              </main>
            </div>

            <!-- details pane -->
            <div class="flex h-[49px] shrink-0 border-t-2 border-[#d9e1ee] bg-[#f4f1fc] pt-1 pl-4 text-[#1e395b]">
              <svg class="mr-3 h-[42px] w-[46px]" viewBox="0 0 46 42"><ellipse cx="28" cy="29" rx="14" ry="5" fill="#dedce5" /><path d="M6 18L18 9q2-1 5-.5l15 2.500q2 .5 1.500 2.500l-1 6q-.5 2-3 4l-7 4q-2 1-4 .5L8 25.500q-2-.5-2-3z" fill="#b4b4b3" stroke="#888" stroke-width=".7" /><path d="M6.500 18L18.500 9.500q2-1 4-.6l15 2.400q1.500.6 0 2L27 20q-1.500 1-4 .7z" fill="#ededed" /><path d="M23.500 21L39 12.500l-1 6.700q-.5 2-3 3.600l-7 4q-2 1-4 .5z" fill="#858585" /><path d="M23 21q-2 3-.5 6M8 20l13 3M8 22l12 3" stroke="#e4e4e4" fill="none" /><path d="M25 20.500v3.500l2-1v-3.500z" fill="#3fbf31" /><path d="M2 29l12 1.500 20 5-1.500 4L18 36 2 33.500z" fill="#d5dedd" stroke="#a7b3b2" stroke-width=".6" /><path d="M12 28.500l13 2.500 1.500 4-3.500 2.500-14-3-1-3.500z" fill="#1aa34b" /><path d="M11 30l13 2.500" stroke="#6fe39a" stroke-width="1.500" /><path d="M21 27v3" stroke="#8e9a96" stroke-width="4" /></svg>
              <span class="text-[12px] leading-[18px]">0 elementos</span>
            </div>

            <!-- Windows taskbar -->
            <div class="flex h-[38px] shrink-0 border-t border-[#78869c] bg-[#abbbdd] text-white">
              <button class="flex w-[55px] shrink-0 items-center bg-[#8692b3] pl-2" aria-label="Inicio"><svg class="size-[34px]" viewBox="0 0 34 34"><defs><radialGradient id="gOrb" cx=".5" cy=".95" r=".9"><stop offset="0" stop-color="#27d8f5" /><stop offset=".4" stop-color="#1679b5" /><stop offset=".75" stop-color="#174271" /><stop offset="1" stop-color="#7da5c9" /></radialGradient></defs><circle cx="17" cy="17" r="16" fill="url(#gOrb)" stroke="#34577c" stroke-width="1.400" /><path d="M3 15a14 14 0 0 1 28 0q-14-6-28 0z" fill="#fff" opacity=".25" /><use href="#win-flag" x="6" y="6" width="23" height="23" /></svg></button>
              <button class="flex w-[57px] items-center justify-center rounded-[2px] border border-[#66738e] bg-linear-to-br from-[#e2e7ef] via-[#c4cddd] to-[#e4e6ea]" aria-label="Explorador de Windows"><svg class="h-[29px] w-8" viewBox="0 0 32 29"><path d="M3 2h9l1 3h15v22H3z" fill="#ecca6b" /><path d="M1 5h9l2 2h8l2 2h7l1 17H2z" fill="url(#gYellow)" stroke="#d2a946" stroke-width=".7" /><path d="M4 2h4v2H4zM12 4h4v2h-4zM20 5h4v2h-4z" fill="#48ae42" /><path d="M12 4h5v2h-5z" fill="#da4a38" /><path d="M20 5.500h6v2h-6z" fill="#4ea4df" /><path d="M5 17h23v10h-6v-4H11v4H5z" fill="#9bd3ee" stroke="#529fc9" stroke-width=".9" /><path d="M6 18.500h21" stroke="#e7f8ff" stroke-width="1.500" /></svg></button>
              <button class="flex w-[60px] items-center justify-center" aria-label="Firefox"><svg class="size-[29px]"><use href="#firefox" /></svg></button>
              <button class="flex w-[56px] items-center justify-center rounded-[2px] border border-[#66738e] bg-linear-to-b from-[#d3dcee] to-[#b3c1de]" aria-label="qBittorrent"><span class="flex size-7 items-center justify-center rounded-full bg-[#3571c6] pb-1 text-xl text-[#c4e0ff]">q<span class="text-white">b</span></span></button>
              <div class="ml-auto flex items-center bg-linear-to-r from-transparent to-[#8490ae] to-[30px] pl-10">
                <span class="mr-[15px] pb-1">ES</span>
                <svg class="mr-3 h-[5px] w-2" viewBox="0 0 8 5"><path d="M.3 4.500L4 .5l3.700 4z" fill="#fff" stroke="#616d8a" stroke-width=".4" /></svg>
                <svg class="mr-[14px] h-[14px] w-4" viewBox="0 0 16 14"><path d="M1 4.500h3L8 1v12L4 9.500H1z" fill="#fff" stroke="#5b6578" stroke-width=".8" /><path d="M9.500 4.500q1.500 2.500 0 5M11.500 3q2.500 4 0 8M13.300 2q3 5 0 10" fill="none" stroke="#f3f3f3" /></svg>
                <time class="mr-[9px] text-center leading-4">01:37 p.m.<br />15/08/2023</time>
                <button class="h-full w-[14px] border border-[#9aa7bf] bg-linear-to-b from-[#717b91] via-[#596277] to-[#8690a6]" aria-label="Mostrar escritorio"></button>
              </div>
            </div>
          </div>
        </div>
      </div>
    </div>

    <!-- host panel -->
    <footer class="flex h-[33px] shrink-0 items-center border-t border-[#171b22] bg-[#343434] pr-1 pl-[3px]">
      <button class="mr-2" aria-label="Menú de aplicaciones"><svg class="size-[22px]" viewBox="0 0 22 22" fill="none" stroke="#ececec"><path d="M17 2.500C10-.3 3 3 1.800 9.500c-.7 4.500 1.500 7.500 4.200 9.500" stroke-width="1.200" /><path d="M18.500 5C11 1.500 5 5.500 5 11.500c0 4.500 3.500 8 8.500 8.500" stroke-width="1.500" /><path d="M15 6.300c-4.500-.5-7.300 2.500-6.500 6.700 1 4 6 5.500 11.500.5" stroke-width="1.300" /></svg></button>
      <button class="mr-[9px]" aria-label="Archivos"><svg class="h-[18px] w-[23px]"><use href="#folder" /></svg></button>
      <button class="mr-[7px]" aria-label="Terminal"><svg class="size-5" viewBox="0 0 20 20"><rect width="20" height="20" rx="1.500" fill="#42484a" /><path d="M0 0h20v3H0z" fill="#5c6163" /><path d="M14 1.500h1M16 1.500h1M18 1.500h1" stroke="#ccc" /><path d="M2.500 5.500l2 1.500-2 1.500M5.500 9h3" fill="none" stroke="#eee" /></svg></button>
      <div class="flex flex-1 gap-[2px]">
        <button class="flex h-[31px] min-w-0 flex-1 items-center gap-[2px] rounded-[5px] border border-[#1b1b1b] bg-[#2c2c2c] pl-[2px]"><svg class="size-[22px] shrink-0"><use href="#firefox-blue" /></svg><span class="whitespace-nowrap">Share folder na...</span></button>
        <button class="flex h-[31px] min-w-0 flex-1 items-center gap-[2px] rounded-[5px] border border-[#1b1b1b] bg-[#2c2c2c] pl-[3px]"><svg class="size-[22px] shrink-0" viewBox="0 0 22 22"><path d="M6 1.500L20.500 1q1.500 0 1 2L17 19q-.5 1.500-2 2L3 20q-2.500-.5-2-3z" fill="#32549b" /><path d="M6.500 1.500L20.500 1q1 .5.800 1.500L16 16.500 1.500 16z" fill="#6f9be8" /><path d="M8 3.500h10l-4 9.500H4z" fill="#527cce" /><path d="M2 17.500l13.500.7L20.500 5" fill="none" stroke="#8fabe0" stroke-width=".8" /></svg><span class="whitespace-nowrap">Porteus Setting...</span></button>
        <button class="flex h-[31px] min-w-0 flex-1 items-center gap-[2px] rounded-[5px] border border-[#1b1b1b] bg-[#2c2c2c] pl-[3px]"><svg class="h-[13px] w-4 shrink-0"><use href="#folder" /></svg>guest</button>
        <button class="flex h-[31px] min-w-0 flex-1 items-center gap-[2px] rounded-[5px] border border-[#1b1b1b] bg-[#2c2c2c] pl-[3px]"><svg class="h-[13px] w-4 shrink-0"><use href="#folder" /></svg>guest</button>
        <button class="flex h-[31px] min-w-0 flex-1 items-center gap-[3px] rounded-[5px] border border-[#1b1b1b] bg-[#2c2c2c] pl-1"><svg class="size-5 shrink-0"><use href="#remmina" /></svg><span class="whitespace-nowrap">Cliente de escri...</span></button>
        <button class="flex h-[31px] min-w-0 flex-1 items-center gap-[3px] rounded-[5px] border border-[#1b1b1b] bg-[#1c1c1c] pl-1"><svg class="size-5 shrink-0"><use href="#remmina" /></svg><span class="whitespace-nowrap">RDP - Geremia</span></button>
      </div>
      <div class="ml-2 flex items-center">
        <span class="mr-3">ES</span>
        <svg class="mr-2 h-[22px] w-5" viewBox="0 0 20 22"><path d="M1 3h15v18H1z" fill="#fff" stroke="#f4cf1d" stroke-width="2" /><path d="M5 1h7v4H5z" fill="#9b9b9b" /><path d="M7 7l8-2 4 9-1 6-9 1-3-7z" fill="#f2f2f2" stroke="#bbb" stroke-width=".6" /><path d="M15 5l4 9-3-1z" fill="#d5d5d5" /></svg>
        <svg class="mr-2 size-[22px]" viewBox="0 0 22 22"><circle cx="11" cy="11" r="10.800" fill="#fff" /><path d="M2 13A9.300 9.300 0 0 1 18 5" fill="none" stroke="#2aad68" stroke-width="2.500" /><path d="M20 9A9.300 9.300 0 0 1 4 17" fill="none" stroke="#43a1e8" stroke-width="2.500" /><path d="M7 6l4.500 3.500L7.500 13" fill="none" stroke="#2aad68" stroke-width="2.300" /><path d="M15 16.500L10.500 13l4-3.500" fill="none" stroke="#348ed8" stroke-width="2.300" /></svg>
        <svg class="mr-[7px] size-[22px]" viewBox="0 0 22 22"><circle cx="11" cy="11" r="10.500" fill="#147fa4" /><path d="M.8 10a10.300 10.300 0 0 1 20.400 0z" fill="#22a6ca" /><path d="M15 6.500l-8 4.500 8 4.500" fill="none" stroke="#fff" stroke-width="1.300" /><circle cx="15" cy="6.500" r="2.300" fill="#fff" /><circle cx="7" cy="11" r="2.500" fill="#fff" /><circle cx="15" cy="15.500" r="2.300" fill="#fff" /></svg>
        <svg class="mr-[10px] size-5" viewBox="0 0 20 20"><path d="M3 2h14q2 0 2 2v11q0 2-2 2H9l-3 3v-3H3q-2 0-2-2V4q0-2 2-2z" fill="url(#gMetal)" /><circle cx="14.500" cy="3" r="3" fill="#1692ad" /></svg>
        <svg class="mr-[7px] size-4" viewBox="0 0 16 16"><path d="M1 5.500h3L8.500 1.500v13L4 10.500H1z" fill="#eee" /><path d="M10 5.500q2 2.500 0 5" fill="none" stroke="#ccc" stroke-width="1.500" /><path d="M12 3q4 5 0 10" fill="none" stroke="#777" stroke-width="1.500" /></svg>
        <time class="mr-1.5 whitespace-nowrap">01:37:45 P. M.</time>
        <button aria-label="Escritorio"><svg class="h-[17px] w-[21px]" viewBox="0 0 22 18"><use href="#folder" width="22" height="18" /><path d="M6 6.500h4l1 1h5V14H6z" fill="none" stroke="#0969bd" /></svg></button>
      </div>
    </footer>
  </body>
</html>
